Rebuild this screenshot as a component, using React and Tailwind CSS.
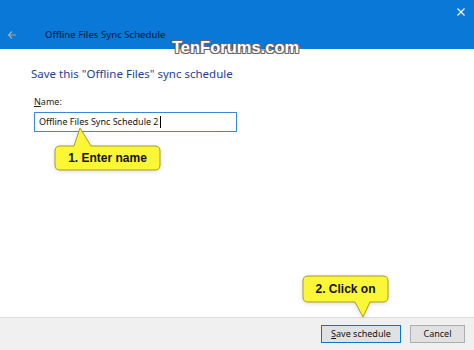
import React from "react";

const ui = { fontFamily: '"Noto Sans", "Open Sans", sans-serif' };
const arial = { fontFamily: '"Liberation Sans", Arial, sans-serif' };

export default function App() {
  return (
    <div className="relative w-[474px] h-[350px] bg-white flex flex-col overflow-hidden" style={ui}>
      {/* title bar */}
      <div className="h-[49px] bg-[#0a78d7] flex items-center pt-[20px] pl-[7px]">
        <svg width="10" height="10" viewBox="0 0 10 10" className="opacity-80">
          <path d="M9 5H1.5M5 1.5L1.5 5L5 8.5" stroke="#d9b48a" strokeWidth="1.2" fill="none" />
        </svg>
        <span className="ml-[28px] text-[9.5px] font-medium text-[#0d2344] leading-none">Offline Files Sync Schedule</span>
      </div>
      <svg className="absolute left-[457px] top-[8px]" width="8" height="8" viewBox="0 0 8 8">
        <path d="M0.5 0.5L7.5 7.5M7.5 0.5L0.5 7.5" stroke="white" strokeWidth="1.1" />
      </svg>
      {/* watermark */}
      <div
        className="absolute left-[172px] top-[39px] text-[16.5px] font-bold text-white leading-none [text-shadow:1px_1px_0_#666,-1px_-1px_0_#666,1px_-1px_0_#666,-1px_1px_0_#666]"
        style={arial}
      >
        TenForums.com
      </div>

      {/* content */}
      <div className="pl-[31px] pt-[16px] text-[11.5px] text-[#1f3f93] leading-[18px]">
        Save this "Offline Files" sync schedule
      </div>
      <div className="pl-[34px] pt-[12px] text-[9px] text-[#222] leading-[14px]">
        <span className="underline">N</span>ame:
      </div>
      <div className="ml-[34px] mt-[3px] w-[203px] h-[20px] border border-[#3b88d6] flex items-center pl-[4px] text-[9px] text-[#111]">
        Offline Files Sync Schedule 2<span className="inline-block w-px h-[12px] bg-black ml-px" />
      </div>

      <div className="flex-1" />

      {/* bottom bar */}
      <div className="h-[33px] bg-[#f0f0f0] border-t border-[#dcdcdc] flex items-center justify-end pr-[9px] gap-[9px]">
        <div className="w-[80px] h-[18px] bg-[#e1e1e1] border border-[#0078d7] flex items-center justify-center text-[9px] text-[#111]">
          <span className="underline">S</span>ave schedule
        </div>
        <div className="w-[55px] h-[18px] bg-[#e1e1e1] border border-[#adadad] flex items-center justify-center text-[9px] text-[#111]">
          Cancel
        </div>
      </div>

      {/* callout 1 */}
      <svg className="absolute left-[50px] top-[124px] drop-shadow-sm" width="120" height="54" viewBox="0 0 120 54">
        <path
          d="M10,22 L24,22 L30,4 L41,22 L105,22 Q110,22 110,27 L110,41 Q110,46 105,46 L10,46 Q5,46 5,41 L5,27 Q5,22 10,22 Z"
          fill="#fbf636"
          stroke="#a79f22"
          strokeWidth="1"
        />
      </svg>
      <div className="absolute left-[55px] top-[146px] w-[105px] h-[24px] flex items-center justify-center text-[12px] font-bold text-[#111]" style={arial}>
        1. Enter name
      </div>

      {/* callout 2 */}
      <svg className="absolute left-[298px] top-[272px] drop-shadow-sm" width="96" height="50" viewBox="0 0 96 50">
        <path
          d="M10,4 L85,4 Q90,4 90,9 L90,25 Q90,30 85,30 L72,30 L65,45 L57,30 L10,30 Q5,30 5,25 L5,9 Q5,4 10,4 Z"
          fill="#fbf636"
          stroke="#a79f22"
          strokeWidth="1"
        />
      </svg>
      <div className="absolute left-[303px] top-[276px] w-[85px] h-[26px] flex items-center justify-center text-[12px] font-bold text-[#111]" style={arial}>
        2. Click on
      </div>
    </div>
  );
}
